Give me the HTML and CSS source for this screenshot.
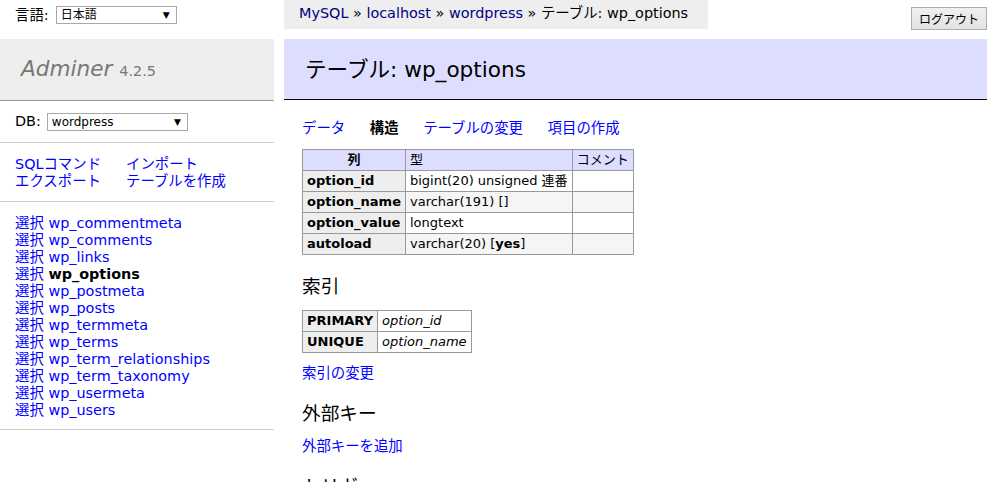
FILE: index.html
```html
<!DOCTYPE html>
<html lang="ja">
<head>
    <meta charset="UTF-8">
    <title>テーブル: wp_options - Adminer</title>
    <link rel="stylesheet" href="styles.css">
</head>
<body>
<div class="page">
    <div class="side">
        <form id="lang">言語: <span class="sel lang-sel"><select><option>日本語</option></select></span></form>
        <div id="menu">
            <h1><a href="#" id="h1">Adminer</a> <span id="version">4.2.5</span></h1>
            <p id="dbs">DB: <span class="sel db-sel"><select><option>wordpress</option></select></span></p>
            <p class="links">
                <a href="#" class="w1">SQLコマンド</a><a href="#">インポート</a><br>
                <a href="#" class="w1">エクスポート</a><a href="#">テーブルを作成</a>
            </p>
            <p id="tables">
                <a href="#">選択</a> <a href="#">wp_commentmeta</a><br>
                <a href="#">選択</a> <a href="#">wp_comments</a><br>
                <a href="#">選択</a> <a href="#">wp_links</a><br>
                <a href="#">選択</a> <a href="#" class="active">wp_options</a><br>
                <a href="#">選択</a> <a href="#">wp_postmeta</a><br>
                <a href="#">選択</a> <a href="#">wp_posts</a><br>
                <a href="#">選択</a> <a href="#">wp_termmeta</a><br>
                <a href="#">選択</a> <a href="#">wp_terms</a><br>
                <a href="#">選択</a> <a href="#">wp_term_relationships</a><br>
                <a href="#">選択</a> <a href="#">wp_term_taxonomy</a><br>
                <a href="#">選択</a> <a href="#">wp_usermeta</a><br>
                <a href="#">選択</a> <a href="#">wp_users</a>
            </p>
        </div>
    </div>

    <div class="main">
        <div class="top">
            <p id="breadcrumb"><a href="#" class="v">MySQL</a> » <a href="#" class="v">localhost</a> » <a href="#" class="v">wordpress</a> » テーブル: wp_options</p>
            <input type="submit" id="logout" value="ログアウト">
        </div>
        <div id="content">
            <h2>テーブル: wp_options</h2>
            <p class="links">
                <a href="#">データ</a>
                <a href="#" class="active">構造</a>
                <a href="#">テーブルの変更</a>
                <a href="#">項目の作成</a>
            </p>
            <table class="struct">
                <thead><tr><th>列</th><td>型</td><td>コメント</td></tr></thead>
                <tr><th>option_id</th><td>bigint(20) unsigned <i>連番</i></td><td></td></tr>
                <tr class="odd"><th>option_name</th><td>varchar(191) []</td><td></td></tr>
                <tr><th>option_value</th><td>longtext</td><td></td></tr>
                <tr class="odd"><th>autoload</th><td>varchar(20) [<b>yes</b>]</td><td></td></tr>
            </table>

            <h3>索引</h3>
            <table class="indexes">
                <tr><th>PRIMARY</th><td><i>option_id</i></td></tr>
                <tr><th>UNIQUE</th><td><i>option_name</i></td></tr>
            </table>
            <p class="links"><a href="#">索引の変更</a></p>

            <h3>外部キー</h3>
            <p class="links"><a href="#">外部キーを追加</a></p>

            <h3>トリガ</h3>
            <p class="links"><a href="#">トリガーの追加</a></p>
        </div>
    </div>
</div>
</body>
</html>
```

FILE: styles.css
```css
body{
    color:#000;
    background:#fff;
    font:14.4px/17px "DejaVu Sans", Verdana, "Noto Sans CJK JP", sans-serif;
    margin:0;
    overflow:hidden;
}
a{
    color:blue;
    text-decoration:none;
}
a.v{
    color:navy;
}
.page{
    display:grid;
    grid-template-columns:274px 1fr;
    column-gap:10px;
}

/* left menu */
#lang{
    box-sizing:border-box;
    height:39px;
    padding:6px 15px 15px;
    display:flex;
    align-items:center;
}
.sel{
    position:relative;
    display:inline-block;
}
.lang-sel{ width:121px; margin-left:7px; }
.db-sel{ width:141px; margin-left:6px; }
.sel select{
    -webkit-appearance:none;
    appearance:none;
    display:block;
    width:100%;
    height:18px;
    border:1px solid #a9a9a9;
    background:#fff;
    font:12px/16px "DejaVu Sans", Arial, "Noto Sans CJK JP", sans-serif;
    color:#000;
    padding:0 4px;
    border-radius:0;
}
.sel::after{
    content:'▼';
    position:absolute;
    right:7px;
    top:3px;
    font-size:9px;
    line-height:12px;
    pointer-events:none;
}
#menu h1{
    font-size:21.6px;
    line-height:27px;
    margin:0;
    padding:16px 21px 15px;
    border-bottom:1px solid #999;
    font-weight:normal;
    color:#777;
    background:#eee;
}
#h1{
    color:#777;
    font-style:italic;
}
#version{
    font-size:14.4px;
    color:#777;
}
#menu p{
    margin:0;
    padding:12px 15px;
    border-bottom:1px solid #ccc;
}
#dbs{
    display:flex;
    align-items:center;
    height:17px;
}
#menu p.links{
    padding:13px 15px 11px;
}
#menu .links .w1{
    display:inline-block;
    width:111px;
}
#menu #tables{
    white-space:nowrap;
    padding:13px 15px 10px;
}
a.active{
    color:#000;
    font-weight:bold;
}

/* right side */
.top{
    height:39px;
    display:flex;
    align-items:flex-start;
    justify-content:space-between;
    padding-right:20px;
}
#breadcrumb{
    margin:0;
    white-space:nowrap;
    background:#eee;
    height:29px;
    line-height:26px;
    padding:0 20px 0 15px;
}
#logout{
    margin-top:7px;
    height:23px;
    padding:0 7px;
    font:12px "DejaVu Sans", "Noto Sans CJK JP", sans-serif;
    background:linear-gradient(#f0f0f0,#e3e3e3);
    border:1px solid #adadad;
    border-radius:0;
    color:#000;
}
#content{
    padding:0 20px 20px 18px;
}
h2{
    font-size:21.6px;
    line-height:27px;
    margin:0 0 20px -18px;
    padding:17px 21px 16px;
    border-bottom:1px solid #000;
    font-weight:normal;
    background:#ddf;
}
h3{
    font-weight:normal;
    font-size:18.7px;
    line-height:23px;
    margin:20px 0 0;
}
p{
    margin:12px 0;
}
h3 + p{
    margin-top:13px;
}
#content .links a{
    margin-right:20px;
    white-space:nowrap;
}
table{
    margin:11px 20px 0 0;
    border-collapse:separate;
    border-spacing:0;
    border-top:1px solid #999;
    border-left:1px solid #999;
    font-size:13px;
    line-height:16px;
    white-space:nowrap;
}
td, th{
    border-right:1px solid #999;
    border-bottom:1px solid #999;
    padding:2px 4px;
}
th{
    background:#eee;
    text-align:left;
}
thead th{
    text-align:center;
    padding:2px 7px;
}
thead td, thead th{
    background:#ddf;
}
.odd td{
    background:#f5f5f5;
}
td i{
    font-style:normal;
}
.indexes td i{
    font-style:italic;
}
.indexes{
    margin-top:12px;
}
```
